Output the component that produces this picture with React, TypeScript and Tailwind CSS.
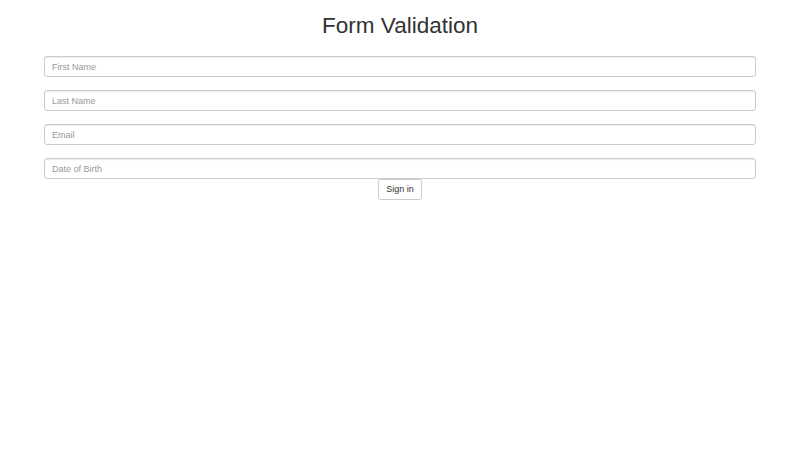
import React from "react";

export default function App() {
  const fields = ["First Name", "Last Name", "Email", "Date of Birth"];
  return (
    <div className="min-h-[450px] w-full bg-white text-[#333]" style={{ fontFamily: '"Liberation Sans", Arial, sans-serif' }}>
      <h1 className="pt-[13px] text-center text-[22.5px] leading-[25px] font-normal text-[#333]">Form Validation</h1>
      <form className="mx-[44px] mt-[18px] flex flex-col" onSubmit={(e) => e.preventDefault()}>
        <div className="flex flex-col gap-[13px]">
          {fields.map((f) => (
            <input
              key={f}
              type="text"
              placeholder={f}
              className="block h-[21px] w-full rounded-[3px] border border-[#ccc] bg-white px-[7px] text-[9px] leading-[19px] text-[#555] placeholder:text-[#999] shadow-[inset_0_1px_1px_rgba(0,0,0,0.075)] outline-none"
            />
          ))}
        </div>
        <div className="flex justify-center">
          <button
            type="submit"
            className="h-[21px] rounded-[2.5px] border border-[#ccc] bg-white px-[7px] text-[9px] leading-[19px] text-[#333]"
          >
            Sign in
          </button>
        </div>
      </form>
    </div>
  );
}
